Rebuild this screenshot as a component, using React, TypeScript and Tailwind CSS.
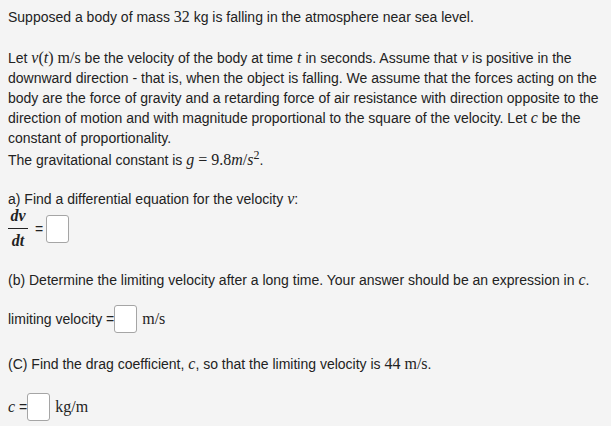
import React from "react";

const M: React.FC<{ children: React.ReactNode; it?: boolean }> = ({ children, it = true }) => (
  <span
    className={`font-['Liberation_Serif',serif] text-[16px] text-[#222] ${it ? "italic" : ""}`}
  >
    {children}
  </span>
);

const AnswerBox: React.FC = () => (
  <input
    type="text"
    className="h-[28px] w-[23px] rounded-[3px] border border-[#a5a5a5] bg-white align-middle outline-none"
  />
);

const App: React.FC = () => {
  return (
    <div className="min-h-[426px] w-[611px] bg-[#f4f4f4] px-[8px] pt-[7px] font-['Liberation_Sans',Arial,sans-serif] text-[14px] leading-[20px] text-[#222]">
      <p>
        Supposed a body of mass <M it={false}>32</M> kg is falling in the atmosphere near sea level.
      </p>

      <p className="mt-[21px]">
        Let{" "}
        <M it={false}>
          <i>v</i>(<i>t</i>) m/s
        </M>{" "}
        be the velocity of the body at time <M>t</M> in seconds. Assume that <M>v</M> is positive
        in the downward direction - that is, when the object is falling. We assume that the forces
        acting on the body are the force of gravity and a retarding force of air resistance with
        direction opposite to the direction of motion and with magnitude proportional to the square
        of the velocity. Let <M>c</M> be the constant of proportionality.
      </p>
      <p className="mt-[2px]">
        The gravitational constant is{" "}
        <M it={false}>
          <i>g</i> = 9.8<i>m</i>/<i>s</i>
          <sup className="text-[12px]">2</sup>
        </M>
        .
      </p>

      <p className="mt-[19px]">
        a) Find a differential equation for the velocity <M>v</M>:
      </p>
      <div className="flex items-center">
        <div className="flex flex-col items-center font-['Liberation_Serif',serif] text-[16px] font-bold italic leading-[14px]">
          <span className="px-[2px]">dv</span>
          <span className="my-[5px] h-px w-[20px] bg-[#222]" />
          <span className="px-[2px]">dt</span>
        </div>
        <span className="ml-[7px] mr-[3px]">=</span>
        <AnswerBox />
      </div>

      <p className="mt-[22px]">
        (b) Determine the limiting velocity after a long time. Your answer should be an expression
        in <M>c</M>.
      </p>
      <div className="mt-[15px] flex items-center">
        <span>limiting velocity =</span>
        <AnswerBox />
        <span className="ml-[5px]">
          <M it={false}>m/s</M>
        </span>
      </div>

      <p className="mt-[21px]">
        (C) Find the drag coefficient, <M>c</M>, so that the limiting velocity is{" "}
        <M it={false}>44 m/s</M>.
      </p>
      <div className="mt-[19px] flex items-center">
        <M>c</M>
        <span className="ml-[4px]">=</span>
        <AnswerBox />
        <span className="ml-[5px]">
          <M it={false}>kg/m</M>
        </span>
      </div>
    </div>
  );
};

export default App;
